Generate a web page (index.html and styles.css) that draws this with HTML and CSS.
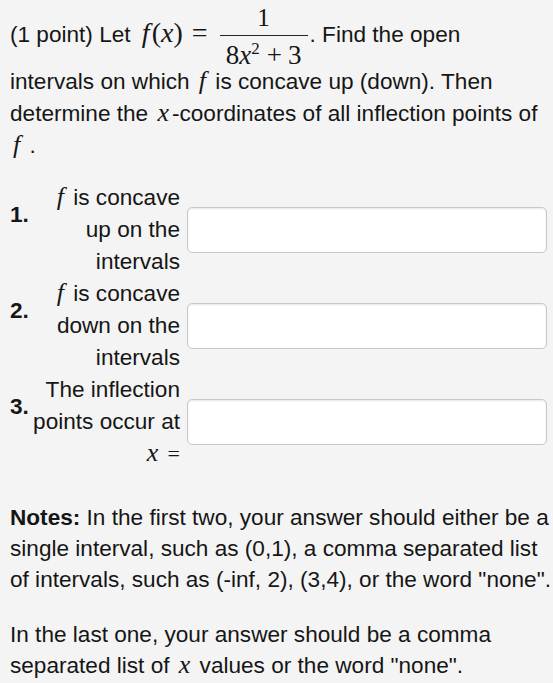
FILE: index.html
```html
<!DOCTYPE html>
<html>
<head>
<meta charset="utf-8">
<link rel="stylesheet" href="styles.css">
</head>
<body>
<div class="page">
  <p class="intro"><span class="first">(1 point) Let <span class="m"><i class="fi">f</i>(<i>x</i>)<span class="rel">=</span></span><span class="frac"><span class="num">1</span><span class="den">8<i>x</i><sup>2</sup><span class="bin">+</span>3</span></span>. Find the open</span><br>intervals on which <i class="mi">f</i> is concave up (down). Then<br>determine the <i class="mi">x</i>-coordinates of all inflection points of<br><i class="mi">f</i> .</p>

  <div class="items">
    <div class="item">
      <div class="no">1.</div>
      <div class="label"><i class="mi">f</i> is concave<br>up on the<br>intervals</div>
      <div class="field"><div class="box"></div></div>
    </div>
    <div class="item">
      <div class="no">2.</div>
      <div class="label"><i class="mi">f</i> is concave<br>down on the<br>intervals</div>
      <div class="field"><div class="box"></div></div>
    </div>
    <div class="item">
      <div class="no">3.</div>
      <div class="label">The inflection<br>points occur at<br><i class="mi">x</i> <span class="eq">=</span></div>
      <div class="field"><div class="box"></div></div>
    </div>
  </div>

  <p class="notes"><b>Notes:</b> In the first two, your answer should either be a<br>single interval, such as (0,1), a comma separated list<br>of intervals, such as (-inf, 2), (3,4), or the word "none".</p>
  <p class="notes last">In the last one, your answer should be a comma<br>separated list of <i class="mi">x</i> values or the word "none".</p>
</div>
</body>
</html>
```
FILE: styles.css
```css
html, body {
  margin: 0;
  padding: 0;
  background: #f4f4f4;
}
.page {
  padding: 0 2px 0 10px;
  font-family: "Liberation Sans", Arial, sans-serif;
  font-size: 22.6px;
  color: #161616;
}
p { margin: 0; }
.intro {
  line-height: 32px;
}
.first {
  display: inline-block;
  line-height: 30px;
  padding-top: 6px;
  margin-bottom: -1px;
}
.m, .mi, .frac, .eq {
  font-family: "Liberation Serif", "Times New Roman", serif;
}
.m { font-size: 28px; margin-left: 5px; line-height: 20px; }
.fi { padding-right: 2px; }
.rel { margin: 0 12px 0 9px; }
.mi { font-style: italic; font-size: 26px; padding: 0 3px; line-height: 20px; }
.eq { font-size: 22px; line-height: 20px; }
.frac {
  display: inline-flex;
  flex-direction: column;
  align-items: center;
  vertical-align: 16px;
  line-height: 24px;
  font-size: 27px;
  margin-right: 2px;
}
.frac .num {
  display: block;
  padding: 0 0 5px;
  border-bottom: 1.5px solid #222;
  width: 88px;
  text-align: center;
  font-size: 25px;
}
.frac .den { display: block; padding-top: 7px; }
.frac sup { font-size: 17px; vertical-align: 10px; line-height: 0; }
.bin { margin: 0 6px 0 7px; }

.items {
  margin-top: 20px;
  display: flex;
  flex-direction: column;
}
.item {
  display: grid;
  grid-template-columns: 13px 150px 1fr;
  column-gap: 7px;
  line-height: 32px;
}
.no {
  font-weight: bold;
  padding-top: 17px;
  white-space: nowrap;
}
.label {
  text-align: right;
  white-space: nowrap;
}
.field {
  display: flex;
  align-items: center;
}
.box {
  width: 100%;
  height: 44px;
  background: #fff;
  border: 1px solid #c8c8c8;
  border-radius: 5px;
  box-shadow: inset 0 1px 2px rgba(0,0,0,0.1);
  margin-right: 4px;
}
.notes {
  line-height: 31px;
  margin-top: 32px;
}
.notes.last { margin-top: 24px; }
```
